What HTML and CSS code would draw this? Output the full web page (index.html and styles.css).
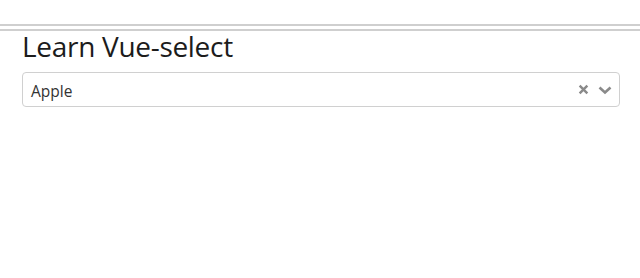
FILE: index.html
```html
<!DOCTYPE html>
<html>
<head>
<meta charset="utf-8">
<link rel="stylesheet" href="styles.css">
</head>
<body>
<div class="rule"></div>
<div class="container">
  <h1 class="title">Learn Vue-select</h1>
  <div class="select">
    <span class="selected">Apple</span>
    <div class="actions">
      <svg class="clear" width="11" height="11" viewBox="0 0 10 10"><path d="M1.5 1.5L8.5 8.5M8.5 1.5L1.5 8.5" stroke="#8a8a8a" stroke-width="2.2" stroke-linecap="butt"/></svg>
      <svg class="caret" width="14" height="10" viewBox="0 0 14 10"><path d="M1.5 2.5L7 7.5L12.5 2.5" fill="none" stroke="#8a8a8a" stroke-width="2.6"/></svg>
    </div>
  </div>
</div>
</body>
</html>
```
FILE: styles.css
```css
html, body {
  margin: 0;
  padding: 0;
  background: #fff;
}
body {
  font-family: "Open Sans", "Noto Sans", sans-serif;
  color: #222;
}
.rule {
  margin-top: 24px;
  height: 3px;
  border-top: 2px solid #cfcfcf;
  border-bottom: 2px solid #cfcfcf;
}
.container {
  padding: 0 20px 0 22px;
}
.title {
  margin: -2px 0 0 0;
  font-size: 28px;
  font-weight: 400;
  line-height: 34px;
  color: #1c1c1c;
  letter-spacing: -0.3px;
}
.select {
  margin-top: 9px;
  height: 35px;
  box-sizing: border-box;
  border: 1px solid #d0d0d0;
  border-radius: 4px;
  display: flex;
  align-items: center;
  justify-content: space-between;
  padding: 0 7px 0 8px;
}
.selected {
  font-size: 15.5px;
  color: #333;
  padding-top: 2px;
}
.actions {
  display: flex;
  align-items: center;
  gap: 9px;
}
.clear, .caret {
  display: block;
}
```
